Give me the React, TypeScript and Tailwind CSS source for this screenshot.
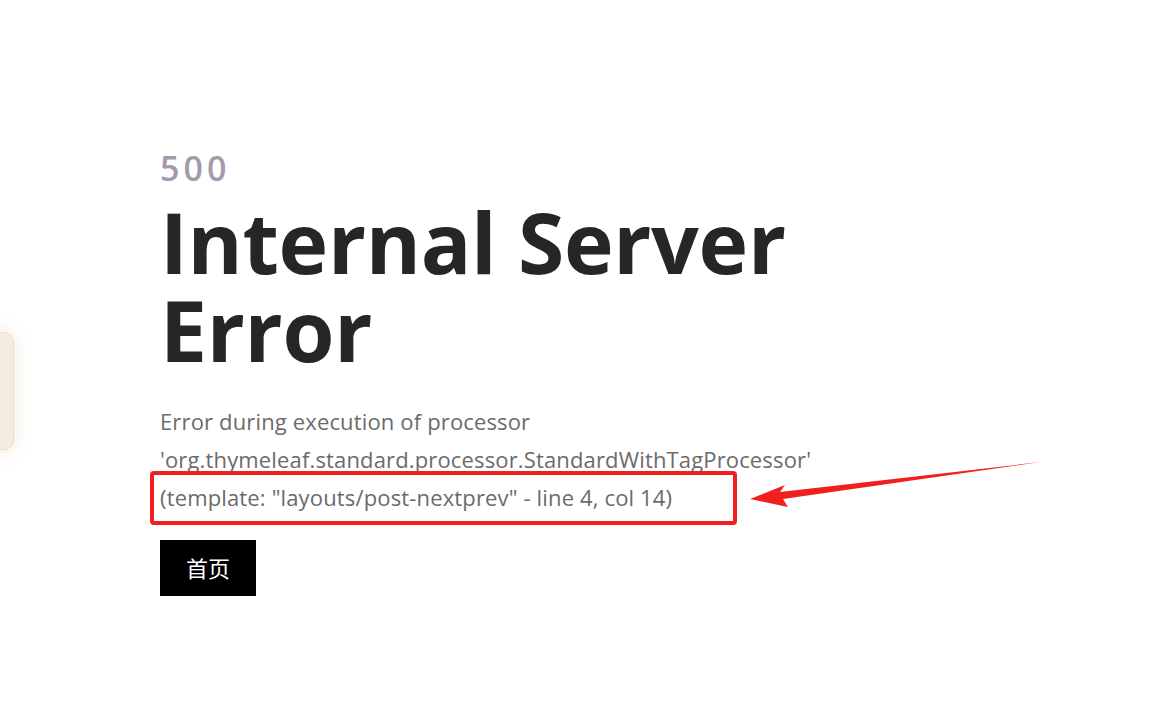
import React from "react";

export default function App() {
  return (
    <div className="relative w-[1169px] h-[706px] bg-white overflow-hidden" style={{ fontFamily: '"Open Sans", "Noto Sans CJK SC", sans-serif' }}>
      {/* side card peeking */}
      <div className="absolute left-[-30px] top-[332px] w-[44px] h-[118px] rounded-[10px] bg-[#f6ecdf] border border-[#efdcc2] shadow-[0_0_18px_rgba(200,170,120,0.25)]" />

      <div className="pl-[160px] pt-[146px]">
        <div className="text-[34px] leading-[44px] tracking-[4px] text-[#a39aab] font-semibold">500</div>
        <h1 className="mt-[8px] text-[84px] leading-[88px] font-bold text-[#262626] tracking-[-0.3px]">
          Internal Server
          <br />
          Error
        </h1>
        <div className="mt-[28px] text-[22px] leading-[38px] tracking-[0.15px] text-[#6b6b6b]">
          <div>Error during execution of processor</div>
          <div>'org.thymeleaf.standard.processor.StandardWithTagProcessor'</div>
          <div>(template: "layouts/post-nextprev" - line 4, col 14)</div>
        </div>
        <div className="mt-[24px] w-[96px] h-[56px] bg-black text-white text-[22px] flex items-center justify-center">首页</div>
      </div>

      {/* annotation */}
      <div className="absolute left-[150px] top-[471px] w-[587px] h-[54px] border-[4px] border-[#f21f1f] rounded-[4px]" />
      <svg className="absolute left-0 top-0" width="1169" height="706">
        <polygon points="1041,462 780,492 785,485 750,499 788,507 783,499" fill="#f21f1f" />
      </svg>
    </div>
  );
}
